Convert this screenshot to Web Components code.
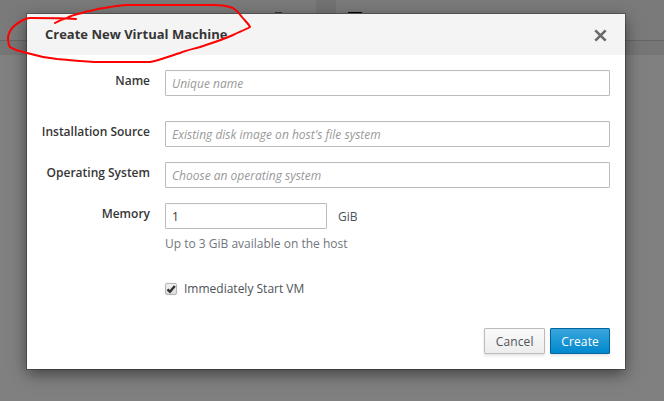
<!DOCTYPE html>
<html>
<head>
<meta charset="utf-8">
<title>Create New Virtual Machine</title>
<style>
  html, body { margin: 0; height: 100%; overflow: hidden; }
  body { font-family: "Open Sans", "Noto Sans", sans-serif; }
</style>
</head>
<body>

<template id="vm-field-template">
  <style>
    :host { display: grid; grid-template-columns: 123px 445px; column-gap: 15px; }
    .label { padding-top: 1px; font-size: 12px; font-weight: 600; color: #363636; text-align: right; line-height: 20px; white-space: nowrap; }
    .control { display: flex; flex-direction: column; }
  </style>
  <div class="label" part="label"></div>
  <div class="control"><slot></slot></div>
</template>

<template id="vm-input-template">
  <style>
    :host { display: block; }
    input {
      display: block; box-sizing: border-box; width: 100%; height: 26px; margin: 0; padding: 2px 6px;
      border: 1px solid #bbb; border-radius: 1px; outline: 0; background: #fff;
      font: 12px "Open Sans", "Noto Sans", sans-serif; color: #363636;
      box-shadow: inset 0 1px 1px rgba(3, 3, 3, .02);
    }
    input::placeholder { color: #999; font-style: italic; opacity: 1; }
  </style>
  <input type="text">
</template>

<template id="vm-button-template">
  <style>
    :host { display: inline-block; }
    button {
      display: block; box-sizing: border-box; height: 26px; margin: 0; padding: 0 10.5px;
      border: 1px solid #bbb; border-radius: 1px;
      background: linear-gradient(#fafafa, #ededed); color: #4d5258;
      font: 12px "Open Sans", "Noto Sans", sans-serif; letter-spacing: .15px;
      box-shadow: 0 2px 3px rgba(3, 3, 3, .1);
    }
    :host([primary]) button {
      padding: 0 10px; border-color: #00659c; color: #fff;
      background: linear-gradient(#39a5dc, #0088ce);
    }
  </style>
  <button type="button"><slot></slot></button>
</template>

<template id="vm-dialog-template">
  <style>
    :host {
      display: flex; flex-direction: column; box-sizing: border-box; width: 598px; height: 355px;
      position: relative; background: #fff;
      box-shadow: 0 0 0 1px rgba(0, 0, 0, .25), 0 5px 15px rgba(0, 0, 0, .5);
    }
    header {
      display: flex; align-items: center; justify-content: space-between; flex: none;
      height: 41px; padding: 0 18px 0 18px; background: #f4f4f4;
    }
    h4 { margin: 0 0 2px; font-size: 13px; font-weight: 700; color: #363636; }
    svg { display: block; margin-top: 2px; }
    main { flex: 1; display: flex; flex-direction: column; padding-top: 15px; }
    footer { display: flex; justify-content: flex-end; gap: 5px; padding: 0 15px 15px; }
  </style>
  <header>
    <h4></h4>
    <svg width="13" height="13" viewBox="0 0 13 13" aria-label="Close">
      <path d="M1.3 1.3l10.4 10.4M11.7 1.3l-10.4 10.4" stroke="#6a6a6a" stroke-width="2.6" fill="none"/>
    </svg>
  </header>
  <main><slot></slot></main>
  <footer><slot name="footer"></slot></footer>
</template>

<template id="vm-backdrop-template">
  <style>
    :host {
      display: block; position: relative; box-sizing: border-box; width: 664px; height: 401px;
      padding: 14px 0 0 27px; overflow: hidden;
      background:
        linear-gradient(#000, #000) 348px 12px / 14px 1px no-repeat,
        linear-gradient(#333, #333) 275px 12px / 7px 1px no-repeat,
        linear-gradient(#727272, #727272) 316px 0 / 20px 14px no-repeat,
        linear-gradient(#7a7a7a 0, #7a7a7a 40px, #666 40px, #666 41px, #767676 41px, #767676 55px, #808080 55px);
    }
    .scribble { position: absolute; left: 0; top: 0; pointer-events: none; }
  </style>
  <slot></slot>
  <svg class="scribble" width="664" height="401" viewBox="0 0 664 401" fill="none">
    <path d="M55 23C60 20 63 19 67 18C72 15 78 14 82 13C85 12 87 11 90 11C97 9 103 8 110 7C116 6 121 5 127 5L213 5C220 5 228 6 233 8C238 11 240 14 242 17C245 21 248 23 250 27C245 30 239 32 233 35C222 40 212 43 200 47C193 49 187 50 180 53C170 56 160 60 150 62C133 62 117 62 100 62C85 62 71 60 57 59C47 58 37 56 27 53C20 51 14 50 10 47C8 44 8 40 8 37C9 33 10 30 13 27C16 24 19 22 23 20C25 19 27 18 30 18C45 18 60 18 76 19" stroke="#f00" stroke-width="2" stroke-linejoin="round" stroke-linecap="round"/>
  </svg>
</template>

<vm-backdrop>
  <vm-dialog heading="Create New Virtual Machine">
    <vm-field label="Name" style="margin-bottom: 25px"><vm-input placeholder="Unique name"></vm-input></vm-field>
    <vm-field label="Installation Source" style="margin-bottom: 15px"><vm-input placeholder="Existing disk image on host's file system"></vm-input></vm-field>
    <vm-field label="Operating System" style="margin-bottom: 15px"><vm-input placeholder="Choose an operating system"></vm-input></vm-field>
    <vm-field label="Memory" style="margin-bottom: 0"><vm-memory value="1" unit="GiB" hint="Up to 3 GiB available on the host"></vm-memory></vm-field>
    <vm-field label="" style="margin-top: 28px"><vm-check checked>Immediately Start VM</vm-check></vm-field>
    <vm-button slot="footer">Cancel</vm-button>
    <vm-button slot="footer" primary>Create</vm-button>
  </vm-dialog>
</vm-backdrop>

<script>
  const stamp = (el, id) => {
    const root = el.attachShadow({mode: 'open'});
    root.appendChild(document.getElementById(id).content.cloneNode(true));
    return root;
  };

  class VmBackdrop extends HTMLElement {
    constructor() {
      super();
      stamp(this, 'vm-backdrop-template');
    }
  }

  class VmDialog extends HTMLElement {
    constructor() {
      super();
      stamp(this, 'vm-dialog-template').querySelector('h4').textContent = this.getAttribute('heading');
    }
  }

  class VmField extends HTMLElement {
    constructor() {
      super();
      stamp(this, 'vm-field-template').querySelector('.label').textContent = this.getAttribute('label');
    }
  }

  class VmInput extends HTMLElement {
    constructor() {
      super();
      const input = stamp(this, 'vm-input-template').querySelector('input');
      if (this.hasAttribute('placeholder')) input.placeholder = this.getAttribute('placeholder');
      if (this.hasAttribute('value')) input.value = this.getAttribute('value');
    }
  }

  class VmButton extends HTMLElement {
    constructor() {
      super();
      stamp(this, 'vm-button-template');
    }
  }

  class VmMemory extends HTMLElement {
    constructor() {
      super();
      const root = this.attachShadow({mode: 'open'});
      root.innerHTML = `
        <style>
          :host { display: block; font-size: 12px; color: #4d5258; }
          .row { display: flex; align-items: center; gap: 11px; }
          vm-input { width: 162px; }
          .hint { margin-top: 7px; line-height: 16px; color: #72767b; }
        </style>
        <div class="row">
          <vm-input value="${ this.getAttribute('value') }"></vm-input>
          <span>${ this.getAttribute('unit') }</span>
        </div>
        <div class="hint">${ this.getAttribute('hint') }</div>
      `;
    }
  }

  class VmCheck extends HTMLElement {
    constructor() {
      super();
      const root = this.attachShadow({mode: 'open'});
      root.innerHTML = `
        <style>
          :host { display: flex; align-items: center; gap: 7px; font-size: 12px; color: #4d5258; line-height: 18px; }
          .box {
            box-sizing: border-box; width: 12px; height: 12px; border: 1px solid #b5b5b5; border-radius: 2px;
            background: linear-gradient(#f2f2f2, #dcdcdc); box-shadow: 0 0 1px rgba(0, 0, 0, .2);
          }
          svg { display: block; }
        </style>
        <div class="box">
          <svg width="10" height="10" viewBox="0 0 10 10"><path d="M1.5 5.3L4 7.8 8.8 2" stroke="#333" stroke-width="2.4" fill="none"/></svg>
        </div>
        <span><slot></slot></span>
      `;
    }
  }

  customElements.define('vm-input', VmInput);
  customElements.define('vm-button', VmButton);
  customElements.define('vm-memory', VmMemory);
  customElements.define('vm-check', VmCheck);
  customElements.define('vm-field', VmField);
  customElements.define('vm-dialog', VmDialog);
  customElements.define('vm-backdrop', VmBackdrop);
</script>
</body>
</html>
